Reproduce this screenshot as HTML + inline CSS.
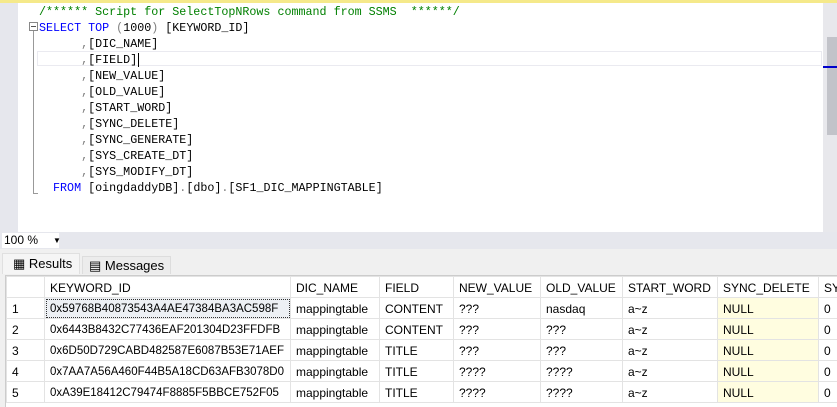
<html><head><style>
body{margin:0;width:837px;height:406px;overflow:hidden;background:#f0f0f0;position:relative;font-family:"Liberation Sans",sans-serif}
.a{position:absolute}
.code{font-family:"Liberation Mono",monospace;font-size:11.7px;line-height:16px;white-space:pre;color:#000}
.k{color:#0000ff}.c{color:#008000}.g{color:#808080}.m{color:#ff00ff}
table{border-collapse:collapse;font-size:12px;font-family:"Liberation Sans",sans-serif}
tr{height:21px}
td{border:1px solid #e3e3e3;height:21px;padding:2px 0 0 5px;box-sizing:border-box;white-space:nowrap;overflow:hidden;background:#fff;vertical-align:middle}
td.id{font-size:11.5px;letter-spacing:0px}
td.n{background:#fffde0}
</style></head><body>
<div class="a" style="left:0;top:0;width:837px;height:3px;background:#f5e98a"></div>
<div class="a" style="left:0;top:3px;width:18px;height:229px;background:#e6e7ed"></div>
<div class="a" style="left:18px;top:3px;width:805px;height:229px;background:#fff"></div>
<div class="a" style="left:37px;top:51px;width:783px;height:13px;border:1px solid #eaeaf0"></div>
<div class="a" style="left:823px;top:3px;width:14px;height:229px;background:#e8e8ec"></div>
<div class="a" style="left:827px;top:37px;width:10px;height:98px;background:#c2c3c9"></div>
<div class="a" style="left:823px;top:66px;width:14px;height:2px;background:#0000cc"></div>
<div class="a" style="left:29px;top:22px;width:7px;height:7px;border:1px solid #888;background:#fff"></div>
<div class="a" style="left:31px;top:26px;width:5px;height:1px;background:#555"></div>
<div class="a" style="left:33px;top:31px;width:1px;height:163px;background:#999"></div>
<div class="a" style="left:33px;top:193px;width:5px;height:1px;background:#999"></div>
<div class="a code" style="left:39px;top:4px"><span class="c">/****** Script for SelectTopNRows command from SSMS  ******/</span>
<span class="k">SELECT</span> <span class="k">TOP</span> <span class="g">(</span>1000<span class="g">)</span> [KEYWORD_ID]
      <span class="g">,</span>[DIC_NAME]
      <span class="g">,</span>[FIELD]<span style="border-left:1px solid #000;margin-left:1px"></span>
      <span class="g">,</span>[NEW_VALUE]
      <span class="g">,</span>[OLD_VALUE]
      <span class="g">,</span>[START_WORD]
      <span class="g">,</span>[SYNC_DELETE]
      <span class="g">,</span>[SYNC_GENERATE]
      <span class="g">,</span>[SYS_CREATE_DT]
      <span class="g">,</span>[SYS_MODIFY_DT]
  <span class="k">FROM</span> [oingdaddyDB]<span class="g">.</span>[dbo]<span class="g">.</span>[SF1_DIC_MAPPINGTABLE]</div>
<div class="a" style="left:0;top:232px;width:837px;height:17px;background:#e6e7ed"></div>
<div class="a" style="left:2px;top:233px;width:57px;height:15px;background:#fff;font-size:12px;line-height:15px;padding-left:2px;box-sizing:border-box">100 %<span style="position:absolute;left:51px;top:0;font-size:8px">▼</span></div>
<div class="a" style="left:2px;top:253px;width:78px;height:21px;background:#f5f5f5;border:1px solid #e0e0e0;border-bottom:none;font-size:13px;line-height:20px;box-sizing:border-box;padding-left:10px">▦ Results</div>
<div class="a" style="left:82px;top:256px;width:89px;height:18px;background:#ececec;border:1px solid #ddd;border-bottom:none;font-size:13px;line-height:18px;box-sizing:border-box;padding-left:6px">▤ Messages</div>
<div class="a" style="left:5px;top:275px;width:832px;height:131px;background:#fff;border-top:1px solid #ccc;border-left:1px solid #ccc;overflow:hidden">
<table style="table-layout:fixed;width:880px">
<colgroup><col style="width:38px"><col style="width:246px"><col style="width:89px"><col style="width:74px"><col style="width:87px"><col style="width:82px"><col style="width:95px"><col style="width:101px"><col style="width:68px"></colgroup>
<tr><td></td><td>KEYWORD_ID</td><td>DIC_NAME</td><td>FIELD</td><td>NEW_VALUE</td><td>OLD_VALUE</td><td>START_WORD</td><td>SYNC_DELETE</td><td>SY</td></tr>
<tr><td>1</td><td class="id" style="background:#edf0f4;outline:1px dotted #333;outline-offset:-2px">0x59768B40873543A4AE47384BA3AC598F</td><td>mappingtable</td><td>CONTENT</td><td>???</td><td>nasdaq</td><td>a~z</td><td class="n">NULL</td><td>0</td></tr>
<tr><td>2</td><td class="id">0x6443B8432C77436EAF201304D23FFDFB</td><td>mappingtable</td><td>CONTENT</td><td>???</td><td>???</td><td>a~z</td><td class="n">NULL</td><td>0</td></tr>
<tr><td>3</td><td class="id">0x6D50D729CABD482587E6087B53E71AEF</td><td>mappingtable</td><td>TITLE</td><td>???</td><td>???</td><td>a~z</td><td class="n">NULL</td><td>0</td></tr>
<tr><td>4</td><td class="id">0x7AA7A56A460F44B5A18CD63AFB3078D0</td><td>mappingtable</td><td>TITLE</td><td>????</td><td>????</td><td>a~z</td><td class="n">NULL</td><td>0</td></tr>
<tr><td>5</td><td class="id">0xA39E18412C79474F8885F5BBCE752F05</td><td>mappingtable</td><td>TITLE</td><td>????</td><td>????</td><td>a~z</td><td class="n">NULL</td><td>0</td></tr>
</table></div>
</body></html>
